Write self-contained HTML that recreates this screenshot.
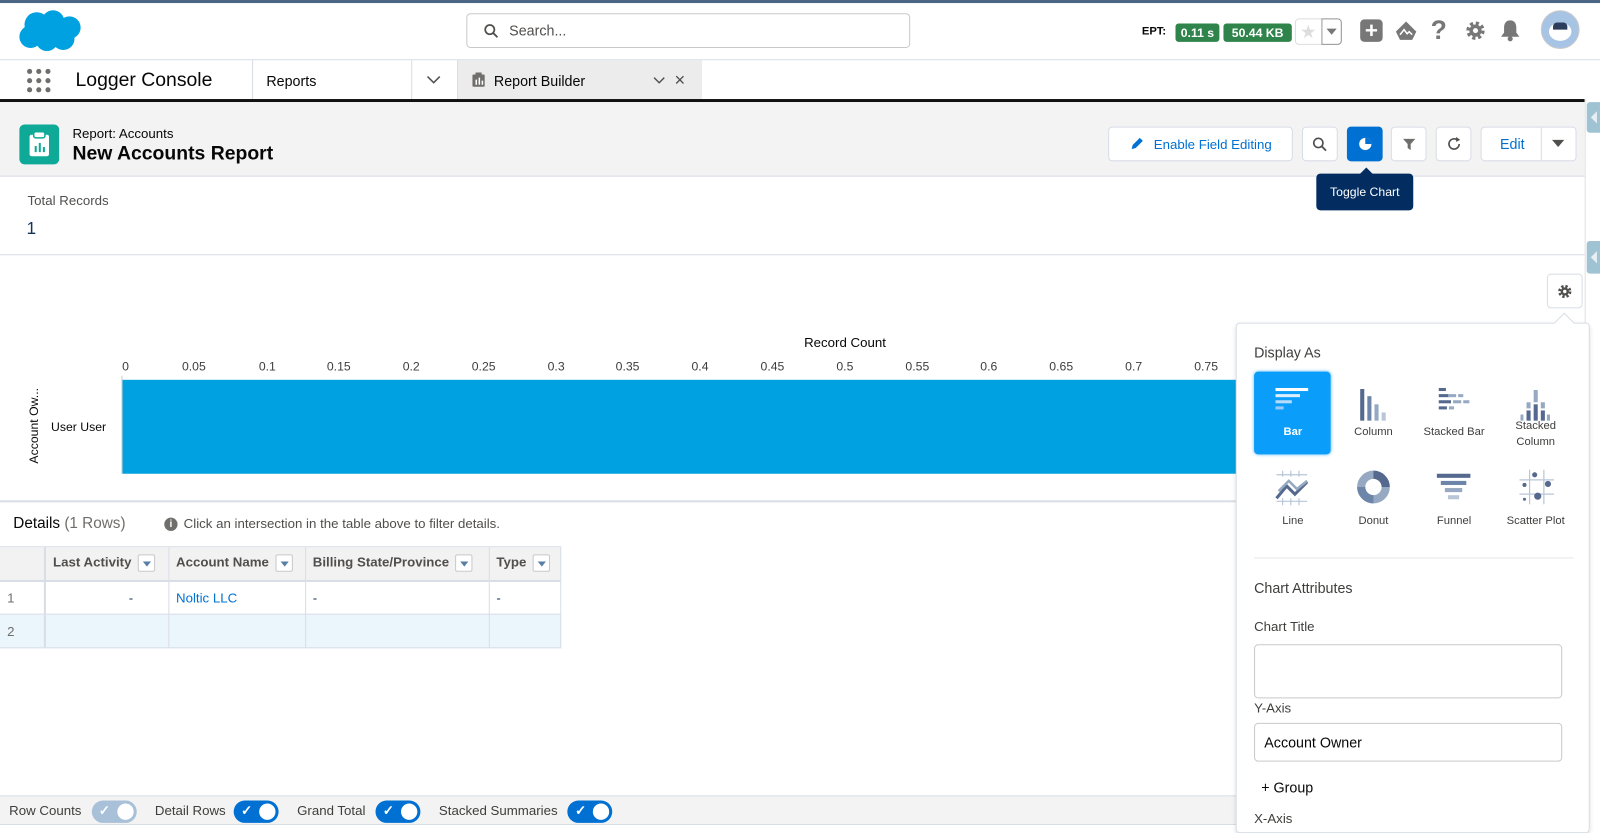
<!DOCTYPE html>
<html><head><meta charset="utf-8"><style>
*{box-sizing:border-box;margin:0;padding:0}
body{width:1600px;height:827px;position:relative;overflow:hidden;background:#fff;font-family:"Liberation Sans",sans-serif;color:#080707;font-size:13px}
#w{position:absolute;left:0;top:0;width:1568px;height:810px;transform:scale(1.0204,1.021);transform-origin:0 0}
.a{position:absolute}
.btn{position:absolute;top:124px;height:34px;border:1px solid #d8dde6;border-radius:4px;background:#fff;display:flex;align-items:center;justify-content:center;color:#0070d2}
.tick{position:absolute;top:352px;font-size:12px;color:#3e3e3c;transform:translateX(-50%)}
.tog{display:inline-block;width:44px;height:22px;border-radius:12px;background:#0070d2;position:relative;vertical-align:middle;margin:0 18px 0 8px}
.tog:after{content:"";position:absolute;right:3px;top:3px;width:16px;height:16px;border-radius:50%;background:#fff}
.tog:before{content:"✓";position:absolute;left:7px;top:2px;color:#fff;font-size:13px;font-weight:bold}
th,td{border-right:1px solid #d8dde6;border-bottom:1px solid #d8dde6;height:33px;padding:0 7px;text-align:left}
th{background:#f3f2f2;color:#514f4d;font-size:13px;font-weight:bold;border-bottom:2px solid #d8dde6}
.dd{display:inline-block;width:17px;height:17px;border:1px solid #c9c9c9;border-radius:2px;vertical-align:middle;margin-left:6px;position:relative;background:#fff}
.dd:after{content:"";position:absolute;left:4px;top:6px;border-left:4px solid transparent;border-right:4px solid transparent;border-top:5px solid #5a7fa6}
.ic{position:absolute;text-align:center;font-size:11px;color:#3e3e3c;width:80px}
</style></head><body><div id="w">
<div class="a" style="left:0;top:0;width:1568px;height:3px;background:#4a6684"></div>
<svg class="a" style="left:16px;top:8px" width="66" height="44" viewBox="0 0 66 44"><g fill="#00a1e0"><circle cx="20" cy="16" r="12"/><circle cx="36" cy="13" r="11"/><circle cx="52" cy="19" r="11"/><circle cx="14" cy="28" r="11"/><circle cx="30" cy="31" r="11"/><circle cx="46" cy="30" r="11"/></g></svg>
<div class="a" style="left:457px;top:13px;width:435px;height:34px;border:1px solid #c9c9c9;border-radius:4px;background:#fff"></div>
<svg class="a" style="left:474px;top:23px" width="15" height="15" viewBox="0 0 15 15"><circle cx="6" cy="6" r="4.5" fill="none" stroke="#514f4d" stroke-width="1.7"/><path d="M9.5 9.5l4 4" stroke="#514f4d" stroke-width="1.8"/></svg>
<div class="a" style="left:499px;top:22px;font-size:14px;color:#514f4d">Search...</div>
<div class="a" style="left:1119px;top:25px;font-size:11px;font-weight:bold">EPT:</div>
<div class="a" style="left:1152px;top:23px;width:43px;height:18px;background:#2e844a;border-radius:3px;color:#fff;font-size:12px;font-weight:bold;text-align:center;line-height:18px">0.11 s</div>
<div class="a" style="left:1199px;top:23px;width:67px;height:18px;background:#2e844a;border-radius:3px;color:#fff;font-size:12px;font-weight:bold;text-align:center;line-height:18px">50.44 KB</div>
<div class="a" style="left:1269px;top:18px;width:46px;height:26px;border:1px solid #ddd;border-radius:4px;color:#ddd;font-size:18px;line-height:24px;padding-left:4px">★</div>
<div class="a" style="left:1295px;top:18px;width:20px;height:26px;border:1px solid #999;border-radius:0 4px 4px 0"></div>
<div class="a" style="left:1300px;top:28px;border-left:5px solid transparent;border-right:5px solid transparent;border-top:6px solid #777"></div>
<div class="a" style="left:1333px;top:19px;width:22px;height:22px;background:#777;border-radius:4px;color:#fff;font-size:22px;line-height:21px;text-align:center;font-weight:bold">+</div>
<svg class="a" style="left:1366px;top:19px" width="24" height="24" viewBox="0 0 24 24"><path d="M12 2 L22 12 L18 20 H6 L2 12Z" fill="#777"/><path d="M6 15l4-5 3 4 2-2 3 3" stroke="#fff" stroke-width="1.5" fill="none"/></svg>
<div class="a" style="left:1402px;top:14px;font-size:26px;color:#777;font-weight:bold">?</div>
<svg class="a" style="left:1435px;top:19px" width="22" height="22" viewBox="0 0 22 22"><circle cx="11" cy="11" r="7" fill="none" stroke="#777" stroke-width="4" stroke-dasharray="3 2.5"/><circle cx="11" cy="11" r="6" fill="#777"/><circle cx="11" cy="11" r="2.5" fill="#fff"/></svg>
<svg class="a" style="left:1469px;top:18px" width="22" height="24" viewBox="0 0 22 24"><path d="M11 2c-4 0-6 3-6 7v5l-3 4h18l-3-4V9c0-4-2-7-6-7z" fill="#777"/><circle cx="11" cy="20" r="2.5" fill="#777"/></svg>
<div class="a" style="left:1510px;top:10px;width:38px;height:38px;border-radius:50%;background:#a7c4e5;border:1px solid #c9c9c9"></div>
<div class="a" style="left:1518px;top:22px;width:22px;height:18px;border-radius:50%;background:#fff"></div>
<div class="a" style="left:1522px;top:22px;width:14px;height:7px;background:#2c3e5c;border-radius:4px 4px 0 0"></div>
<div class="a" style="left:0;top:58px;width:1568px;height:1px;background:#d8dde6"></div>
<svg class="a" style="left:26px;top:67px" width="24" height="24"><g fill="#706e6b"><circle cx="3" cy="3" r="2.5"/><circle cx="12" cy="3" r="2.5"/><circle cx="21" cy="3" r="2.5"/><circle cx="3" cy="12" r="2.5"/><circle cx="12" cy="12" r="2.5"/><circle cx="21" cy="12" r="2.5"/><circle cx="3" cy="21" r="2.5"/><circle cx="12" cy="21" r="2.5"/><circle cx="21" cy="21" r="2.5"/></g></svg>
<div class="a" style="left:74px;top:68px;font-size:19px">Logger Console</div>
<div class="a" style="left:247px;top:59px;width:1px;height:39px;background:#d8dde6"></div>
<div class="a" style="left:261px;top:71px;font-size:14px">Reports</div>
<div class="a" style="left:403px;top:59px;width:1px;height:39px;background:#d8dde6"></div>
<svg class="a" style="left:418px;top:73px" width="14" height="10"><path d="M1 2l6 6 6-6" stroke="#514f4d" stroke-width="1.5" fill="none"/></svg>
<div class="a" style="left:448px;top:59px;width:240px;height:39px;background:#ececec;border-left:1px solid #d8dde6"></div>
<svg class="a" style="left:462px;top:70px" width="14" height="16"><rect x="1" y="3" width="12" height="12" rx="1" fill="#706e6b"/><rect x="4" y="1" width="6" height="4" fill="#706e6b"/><rect x="4" y="8" width="1.5" height="5" fill="#fff"/><rect x="7" y="6" width="1.5" height="7" fill="#fff"/><rect x="10" y="9" width="1.5" height="4" fill="#fff"/></svg>
<div class="a" style="left:484px;top:71px;font-size:14px">Report Builder</div>
<svg class="a" style="left:640px;top:74px" width="12" height="9"><path d="M1 2l5 5 5-5" stroke="#514f4d" stroke-width="1.4" fill="none"/></svg>
<div class="a" style="left:661px;top:68px;font-size:18px;color:#514f4d">×</div>
<div class="a" style="left:0;top:97px;width:1553px;height:3px;background:#111"></div>
<div class="a" style="left:1553px;top:97px;width:15px;height:713px;background:#fff;border-left:1px solid #e0e0e0"></div>
<div class="a" style="left:1555px;top:100px;width:13px;height:30px;background:#9fc3d3;border-radius:3px 0 0 3px"></div>
<div class="a" style="left:1559px;top:109px;border-top:6px solid transparent;border-bottom:6px solid transparent;border-right:6px solid #e8eef2"></div>
<div class="a" style="left:1555px;top:236px;width:13px;height:32px;background:#9fc3d3;border-radius:3px 0 0 3px"></div>
<div class="a" style="left:1559px;top:246px;border-top:6px solid transparent;border-bottom:6px solid transparent;border-right:6px solid #e8eef2"></div>
<div class="a" style="left:0;top:100px;width:1553px;height:73px;background:#f3f3f3;border-bottom:1px solid #d8dde6"></div>
<div class="a" style="left:19px;top:122px;width:39px;height:39px;background:#0eaa97;border-radius:5px"></div>
<svg class="a" style="left:27px;top:128px" width="23" height="27"><rect x="2" y="4" width="19" height="21" rx="2" fill="#fff"/><rect x="6" y="1" width="11" height="6" rx="2" fill="#fff" stroke="#0eaa97" stroke-width="1.5"/><rect x="7" y="15" width="2" height="6" fill="#0eaa97"/><rect x="11" y="12" width="2" height="9" fill="#0eaa97"/><rect x="15" y="16" width="2" height="5" fill="#0eaa97"/></svg>
<div class="a" style="left:71px;top:123px;font-size:13px">Report: Accounts</div>
<div class="a" style="left:71px;top:140px;font-size:19px;font-weight:bold">New Accounts Report</div>
<div class="btn" style="left:1086px;width:181px;font-size:13px"><svg width="14" height="14" style="margin-right:10px"><path d="M2 12l1-4 7-7 3 3-7 7z" fill="#0070d2"/></svg>Enable Field Editing</div>
<div class="btn" style="left:1276px;width:35px"><svg width="15" height="15"><circle cx="6" cy="6" r="4.5" fill="none" stroke="#514f4d" stroke-width="1.6"/><path d="M9.5 9.5l4 4" stroke="#514f4d" stroke-width="1.8"/></svg></div>
<div class="btn" style="left:1320px;width:35px;background:#0070d2;border-color:#0070d2"><svg width="14" height="14"><circle cx="7" cy="7" r="6" fill="#fff"/><path d="M7 7V1a6 6 0 0 1 6 6z" fill="#0070d2"/></svg></div>
<div class="btn" style="left:1363px;width:35px"><svg width="14" height="14"><path d="M1 2h12l-4.5 5v6l-3-2V7z" fill="#706e6b"/></svg></div>
<div class="btn" style="left:1407px;width:35px"><svg width="14" height="14"><path d="M12 7a5 5 0 1 1-2-4" stroke="#514f4d" stroke-width="1.6" fill="none"/><path d="M9 0l4 3-4 2z" fill="#514f4d"/></svg></div>
<div class="btn" style="left:1451px;width:94px;justify-content:flex-start;padding-left:18px;font-size:14px">Edit</div>
<div class="a" style="left:1510px;top:124px;width:1px;height:34px;background:#d8dde6"></div>
<div class="a" style="left:1521px;top:137px;border-left:6px solid transparent;border-right:6px solid transparent;border-top:7px solid #514f4d"></div>
<div class="a" style="left:1290px;top:170px;width:95px;height:36px;background:#032d60;border-radius:4px;color:#fff;font-size:12px;text-align:center;line-height:36px">Toggle Chart</div>
<div class="a" style="left:1332px;top:164px;border-left:7px solid transparent;border-right:7px solid transparent;border-bottom:7px solid #032d60"></div>
<div class="a" style="left:27px;top:189px;font-size:13px;color:#514f4d">Total Records</div>
<div class="a" style="left:26px;top:214px;font-size:17px;color:#16325c">1</div>
<div class="a" style="left:0;top:249px;width:1553px;height:1px;background:#d8dde6"></div>
<div class="a" style="left:788px;top:328px;font-size:13px">Record Count</div>
<div class="tick" style="left:123px">0</div><div class="tick" style="left:190px">0.05</div><div class="tick" style="left:262px">0.1</div><div class="tick" style="left:332px">0.15</div><div class="tick" style="left:403px">0.2</div><div class="tick" style="left:474px">0.25</div><div class="tick" style="left:545px">0.3</div><div class="tick" style="left:615px">0.35</div><div class="tick" style="left:686px">0.4</div><div class="tick" style="left:757px">0.45</div><div class="tick" style="left:828px">0.5</div><div class="tick" style="left:899px">0.55</div><div class="tick" style="left:969px">0.6</div><div class="tick" style="left:1040px">0.65</div><div class="tick" style="left:1111px">0.7</div><div class="tick" style="left:1182px">0.75</div>
<div class="a" style="left:120px;top:372px;width:1100px;height:92px;background:#00a1e0"></div>
<div class="a" style="left:119px;top:368px;width:1px;height:96px;background:#ccc"></div>
<div class="a" style="left:50px;top:411px;font-size:12px">User User</div>
<div class="a" style="left:-12px;top:410px;font-size:12px;transform:rotate(-90deg);width:90px;text-align:center">Account Ow...</div>
<div class="a" style="left:0;top:490px;width:1211px;height:2px;background:#d8dde6"></div>
<div class="a" style="left:13px;top:504px;font-size:15px">Details <span style="color:#706e6b">(1 Rows)</span></div>
<div class="a" style="left:161px;top:507px;width:13px;height:13px;border-radius:50%;background:#706e6b;color:#fff;font-size:10px;text-align:center;line-height:13px;font-weight:bold">i</div>
<div class="a" style="left:180px;top:505px;font-size:13px;color:#514f4d">Click an intersection in the table above to filter details.</div>
<table class="a" style="left:0;top:535px;border-collapse:collapse;border-top:1px solid #d8dde6;width:550px">
<tr><th style="width:44px;border-right:2px solid #d8dde6"></th><th style="width:121px">Last Activity<span class="dd"></span></th><th style="width:134px">Account Name<span class="dd"></span></th><th style="width:180px">Billing State/Province<span class="dd"></span></th><th>Type<span class="dd"></span></th></tr>
<tr><td style="color:#706e6b;border-right:2px solid #d8dde6">1</td><td style="text-align:right;padding-right:34px;color:#16325c">-</td><td style="color:#0070d2">Noltic LLC</td><td style="color:#16325c">-</td><td style="color:#16325c">-</td></tr>
<tr style="background:#ebf5fc"><td style="color:#706e6b;border-right:2px solid #d8dde6">2</td><td></td><td></td><td></td><td></td></tr>
</table>
<div class="a" style="left:0;top:779px;width:1553px;height:29px;background:#f3f3f3;border-top:1px solid #d8dde6;border-bottom:1px solid #d8dde6;padding:4px 0 0 9px;font-size:13px;color:#3e3e3c;white-space:nowrap">Row Counts<span class="tog" style="background:#a8c0d8;margin-left:10px"></span>Detail Rows<span class="tog"></span>Grand Total<span class="tog" style="margin-left:10px"></span>Stacked Summaries<span class="tog" style="margin-left:10px"></span></div>
<div class="a" style="left:1516px;top:268px;width:35px;height:34px;border:1px solid #d8dde6;border-radius:4px;background:#fff"></div>
<svg class="a" style="left:1526px;top:278px" width="15" height="15"><circle cx="7.5" cy="7.5" r="5" fill="none" stroke="#514f4d" stroke-width="3" stroke-dasharray="2.2 1.8"/><circle cx="7.5" cy="7.5" r="4" fill="#514f4d"/><circle cx="7.5" cy="7.5" r="1.7" fill="#fff"/></svg>
<div class="a" style="left:1211px;top:316px;width:347px;height:500px;background:#fff;border:1px solid #d8dde6;border-radius:4px;box-shadow:0 2px 4px rgba(0,0,0,.12)"></div>
<div class="a" style="left:1526px;top:309px;width:14px;height:14px;background:#fff;border-left:1px solid #d8dde6;border-top:1px solid #d8dde6;transform:rotate(45deg)"></div>
<div class="a" style="left:1229px;top:337px;font-size:14px;color:#3e3e3c">Display As</div>
<div class="a" style="left:1229px;top:364px;width:75px;height:81px;background:#0b9dfa;border-radius:4px;box-shadow:0 0 3px #5cb8f5"></div>
<svg class="a" style="left:1248px;top:379px" width="36" height="32"><rect x="2" y="1" width="32" height="3" fill="#fff"/><rect x="2" y="7" width="24" height="3" fill="#dbefff"/><rect x="2" y="13" width="16" height="3" fill="#b6dcfb"/><rect x="2" y="19" width="8" height="3" fill="#96cbf7"/></svg>
<div class="ic" style="left:1227px;top:417px;color:#fff;font-weight:bold">Bar</div>
<svg class="a" style="left:1330px;top:380px" width="30" height="33"><rect x="3" y="1" width="4" height="31" fill="#54698d"/><rect x="10" y="8" width="4" height="24" fill="#6c85a8"/><rect x="17" y="16" width="4" height="16" fill="#97a9c2"/><rect x="24" y="24" width="4" height="8" fill="#b8c6d8"/></svg>
<div class="ic" style="left:1306px;top:417px">Column</div>
<svg class="a" style="left:1408px;top:379px" width="36" height="32"><g fill="#54698d"><rect x="2" y="1" width="7" height="3"/><rect x="2" y="7" width="10" height="3"/><rect x="2" y="13" width="12" height="3"/><rect x="2" y="19" width="8" height="3"/></g><g fill="#97a9c2"><rect x="11" y="7" width="8" height="3"/><rect x="16" y="13" width="8" height="3"/><rect x="12" y="19" width="5" height="3"/><rect x="21" y="7" width="5" height="3"/><rect x="26" y="13" width="6" height="3"/></g></svg>
<div class="ic" style="left:1385px;top:417px">Stacked Bar</div>
<svg class="a" style="left:1490px;top:380px" width="30" height="33"><g fill="#54698d"><rect x="13" y="16" width="4" height="16"/><rect x="20" y="22" width="4" height="10"/><rect x="6" y="22" width="4" height="10"/></g><g fill="#97a9c2"><rect x="13" y="2" width="4" height="12"/><rect x="20" y="14" width="4" height="6"/><rect x="6" y="14" width="4" height="6"/><rect x="0" y="26" width="3" height="6"/><rect x="26" y="26" width="3" height="6"/></g></svg>
<div class="ic" style="left:1465px;top:409px;line-height:16px">Stacked<br>Column</div>
<svg class="a" style="left:1249px;top:461px" width="34" height="34"><g stroke="#b8c6d8" stroke-width="1.2"><path d="M2 4h30M2 30h30M8 0v6M16 0v6M24 0v6M8 27v7M16 27v7M24 27v7"/></g><path d="M2 27l10-12 8 8 12-12" stroke="#54698d" stroke-width="3" fill="none"/><path d="M4 20l10-10 8 8 10-8" stroke="#97a9c2" stroke-width="2.5" fill="none"/></svg>
<div class="ic" style="left:1227px;top:504px">Line</div>
<svg class="a" style="left:1329px;top:460px" width="34" height="34"><circle cx="17" cy="17" r="12" fill="none" stroke="#97a9c2" stroke-width="8"/><path d="M17 5a12 12 0 0 1 12 12" stroke="#54698d" stroke-width="8" fill="none"/><path d="M17 29a12 12 0 0 1-12-12" stroke="#6c85a8" stroke-width="8" fill="none"/></svg>
<div class="ic" style="left:1306px;top:504px">Donut</div>
<svg class="a" style="left:1408px;top:463px" width="34" height="30"><rect x="0" y="1" width="33" height="4" fill="#54698d"/><rect x="4" y="8" width="25" height="4" fill="#6c85a8"/><rect x="8" y="15" width="17" height="4" fill="#97a9c2"/><rect x="11" y="22" width="11" height="4" fill="#b8c6d8"/></svg>
<div class="ic" style="left:1385px;top:504px">Funnel</div>
<svg class="a" style="left:1489px;top:460px" width="34" height="34"><g stroke="#b8c6d8" stroke-width="1.2"><path d="M0 10h34M0 24h34M10 0v34M24 0v34"/></g><g fill="#54698d"><circle cx="15" cy="5" r="2.5"/><circle cx="5" cy="15" r="2"/><circle cx="28" cy="14" r="3"/><circle cx="18" cy="26" r="3.5"/><circle cx="5" cy="29" r="1.5"/></g></svg>
<div class="ic" style="left:1465px;top:504px">Scatter Plot</div>
<div class="a" style="left:1229px;top:546px;width:313px;height:1px;background:#e5e5e5"></div>
<div class="a" style="left:1229px;top:568px;font-size:14px;color:#3e3e3c">Chart Attributes</div>
<div class="a" style="left:1229px;top:606px;font-size:13px;color:#3e3e3c">Chart Title</div>
<div class="a" style="left:1229px;top:631px;width:302px;height:53px;border:1px solid #c9c9c9;border-radius:4px"></div>
<div class="a" style="left:1229px;top:686px;font-size:13px;color:#3e3e3c">Y-Axis</div>
<div class="a" style="left:1229px;top:708px;width:302px;height:38px;border:1px solid #c9c9c9;border-radius:4px;padding:10px 9px;font-size:14px">Account Owner</div>
<div class="a" style="left:1236px;top:763px;font-size:14px">+ Group</div>
<div class="a" style="left:1229px;top:794px;font-size:13px;color:#3e3e3c">X-Axis</div>
</div></body></html>
